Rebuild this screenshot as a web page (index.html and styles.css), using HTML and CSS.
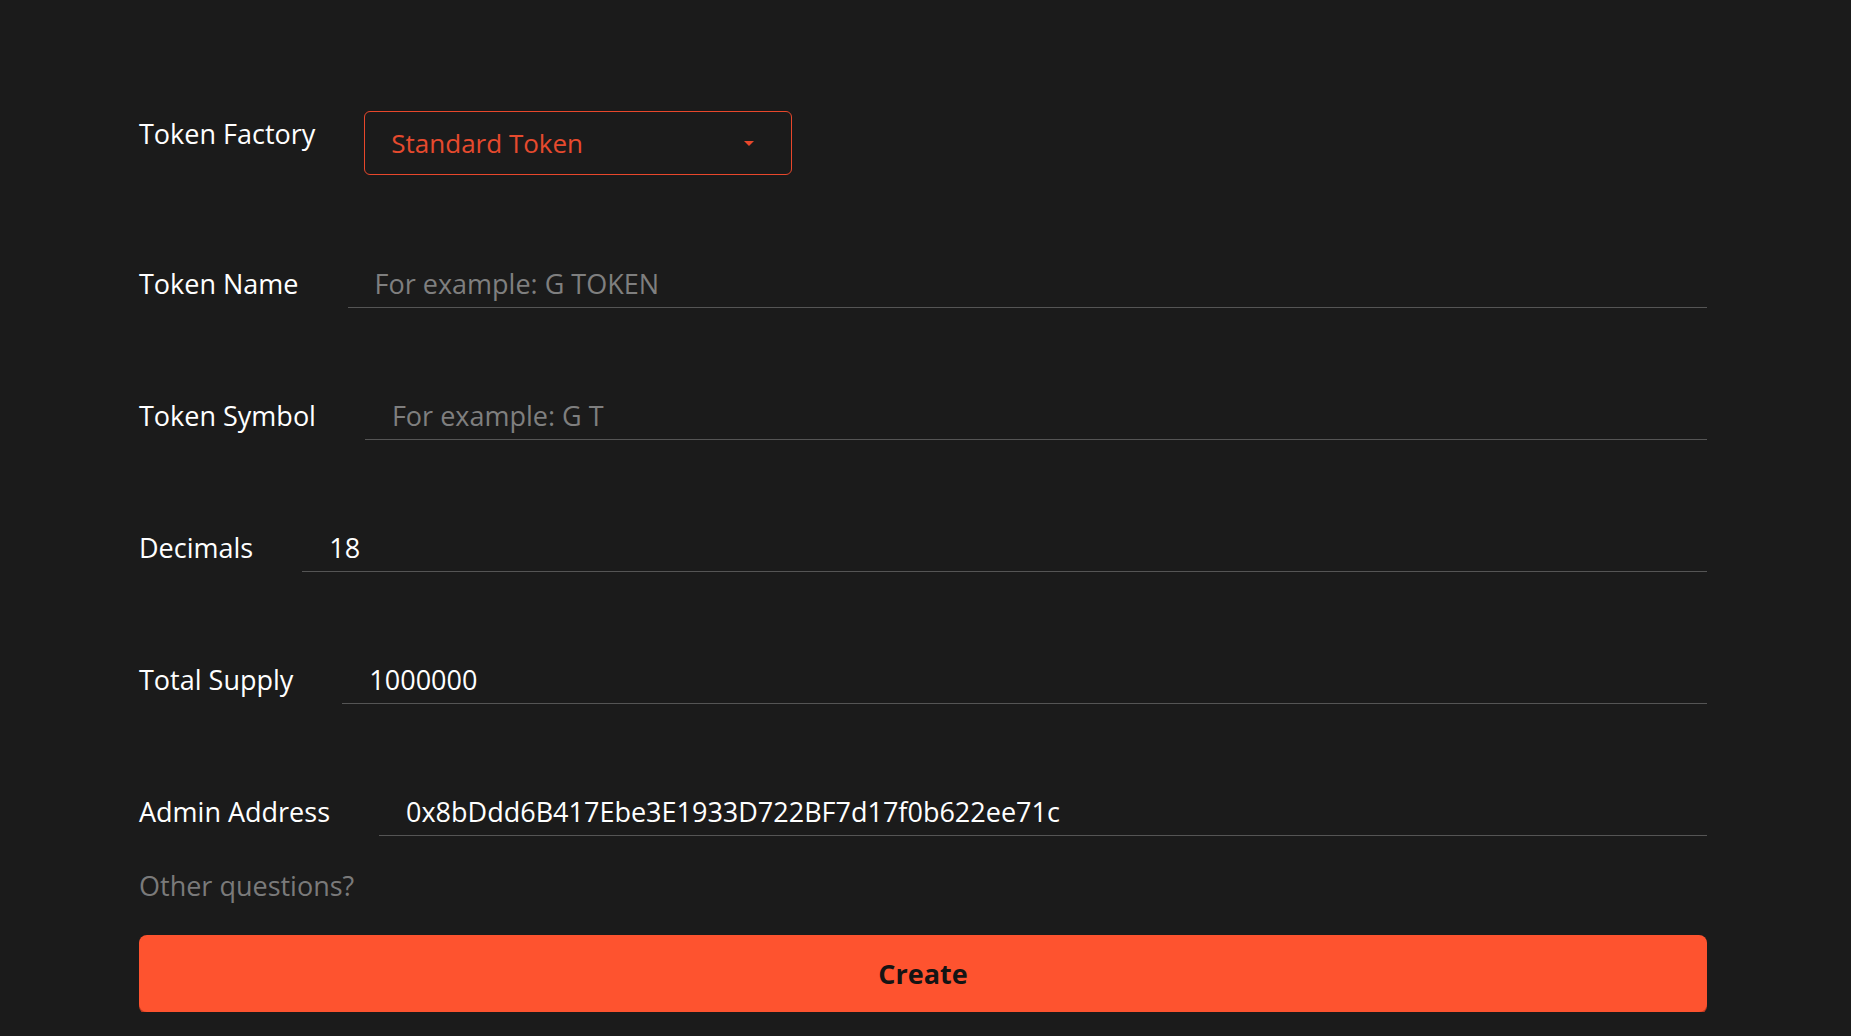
FILE: index.html
```html
<!DOCTYPE html>
<html lang="en">
<head>
<meta charset="utf-8">
<title>Token Factory</title>
<link rel="stylesheet" href="styles.css">
</head>
<body>
<main class="page">
  <form class="form">
    <div class="row row-select">
      <label class="label">Token Factory</label>
      <div class="select">
        <span class="select-text">Standard Token</span>
        <svg class="caret" width="10" height="5" viewBox="0 0 10 5"><path d="M0 0H10L5 5Z" fill="#e8472b"/></svg>
      </div>
    </div>
    <div class="row">
      <label class="label" for="name">Token Name</label>
      <input class="field" id="name" type="text" placeholder="For example: G TOKEN">
    </div>
    <div class="row">
      <label class="label" for="symbol">Token Symbol</label>
      <input class="field" id="symbol" type="text" placeholder="For example: G T">
    </div>
    <div class="row">
      <label class="label" for="decimals">Decimals</label>
      <input class="field" id="decimals" type="text" value="18">
    </div>
    <div class="row">
      <label class="label" for="supply">Total Supply</label>
      <input class="field" id="supply" type="text" value="1000000">
    </div>
    <div class="row">
      <label class="label" for="admin">Admin Address</label>
      <input class="field" id="admin" type="text" value="0x8bDdd6B417Ebe3E1933D722BF7d17f0b622ee71c">
    </div>
    <p class="help">Other questions?</p>
    <button class="create" type="button">Create</button>
  </form>
</main>
</body>
</html>
```

FILE: styles.css
```css
html, body {
  margin: 0;
  background: #1b1b1b;
}
body {
  font-family: "Open Sans", "Noto Sans", sans-serif;
}
.page {
  padding: 111px 144px 0 139px;
}
.form {
  display: flex;
  flex-direction: column;
}
.row {
  display: flex;
  align-items: center;
}
.row + .row {
  margin-top: 83px;
}
.row-select {
  align-items: flex-start;
}
.row-select + .row {
  margin-top: 84px;
}
.label {
  color: #ffffff;
  font-size: 27px;
  line-height: 45px;
  margin-right: 49px;
  white-space: nowrap;
}
.select {
  width: 428px;
  height: 64px;
  box-sizing: border-box;
  border: 1px solid #e8472b;
  border-radius: 6px;
  display: flex;
  align-items: center;
  justify-content: space-between;
  padding: 0 37px 0 26px;
  color: #e64a2e;
  font-size: 26px;
}
.caret {
  display: block;
}
.field {
  flex: 1;
  min-width: 0;
  height: 49px;
  box-sizing: border-box;
  border: none;
  border-bottom: 1px solid #555555;
  background: transparent;
  color: #ffffff;
  font-family: inherit;
  font-size: 27px;
  padding: 0 0 0 27px;
  outline: none;
}
.field::placeholder {
  color: #7f7f7f;
  opacity: 1;
}
.help {
  margin: 30px 0 0;
  color: #7a7a7a;
  font-size: 27px;
  line-height: 40px;
}
.create {
  margin-top: 29px;
  height: 77px;
  width: 100%;
  border: none;
  border-radius: 8px;
  background: #fe532f;
  box-shadow: 0 2px 0 #c23a20;
  color: #141414;
  font-family: inherit;
  font-size: 27px;
  font-weight: 700;
  cursor: pointer;
}
```
